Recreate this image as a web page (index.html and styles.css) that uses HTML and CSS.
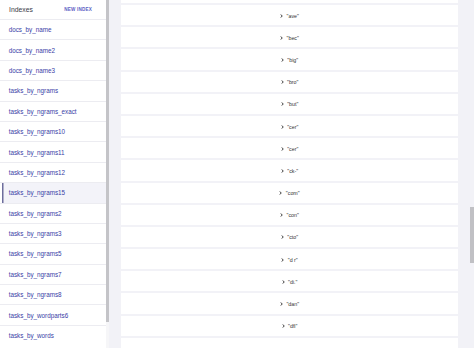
FILE: index.html
```html
<!DOCTYPE html>
<html>
<head>
<meta charset="utf-8">
<link rel="stylesheet" href="styles.css">
</head>
<body>
<div class="app">
  <aside class="sidebar">
    <div class="side-list">
      <div class="side-head">
        <span class="side-title">Indexes</span>
        <span class="new-index">NEW INDEX</span>
      </div>
      <div class="idx">docs_by_name</div>
      <div class="idx">docs_by_name2</div>
      <div class="idx">docs_by_name3</div>
      <div class="idx">tasks_by_ngrams</div>
      <div class="idx">tasks_by_ngrams_exact</div>
      <div class="idx">tasks_by_ngrams10</div>
      <div class="idx">tasks_by_ngrams11</div>
      <div class="idx">tasks_by_ngrams12</div>
      <div class="idx selected">tasks_by_ngrams15</div>
      <div class="idx">tasks_by_ngrams2</div>
      <div class="idx">tasks_by_ngrams3</div>
      <div class="idx">tasks_by_ngrams5</div>
      <div class="idx">tasks_by_ngrams7</div>
      <div class="idx">tasks_by_ngrams8</div>
      <div class="idx">tasks_by_wordparts6</div>
      <div class="idx">tasks_by_words</div>
    </div>
    <div class="side-track"><div class="side-thumb"></div></div>
  </aside>
  <main class="main">
    <div class="rows">
      <div class="row row-cut"></div>
      <div class="row"><svg class="chev" viewBox="0 0 3 4"><path d="M0.6 0.5 L2.3 2 L0.6 3.5"/></svg><span class="val">"ave"</span></div>
      <div class="row"><svg class="chev" viewBox="0 0 3 4"><path d="M0.6 0.5 L2.3 2 L0.6 3.5"/></svg><span class="val">"bec"</span></div>
      <div class="row"><svg class="chev" viewBox="0 0 3 4"><path d="M0.6 0.5 L2.3 2 L0.6 3.5"/></svg><span class="val">"big"</span></div>
      <div class="row"><svg class="chev" viewBox="0 0 3 4"><path d="M0.6 0.5 L2.3 2 L0.6 3.5"/></svg><span class="val">"bro"</span></div>
      <div class="row"><svg class="chev" viewBox="0 0 3 4"><path d="M0.6 0.5 L2.3 2 L0.6 3.5"/></svg><span class="val">"but"</span></div>
      <div class="row"><svg class="chev" viewBox="0 0 3 4"><path d="M0.6 0.5 L2.3 2 L0.6 3.5"/></svg><span class="val">"cer"</span></div>
      <div class="row"><svg class="chev" viewBox="0 0 3 4"><path d="M0.6 0.5 L2.3 2 L0.6 3.5"/></svg><span class="val">"cer"</span></div>
      <div class="row"><svg class="chev" viewBox="0 0 3 4"><path d="M0.6 0.5 L2.3 2 L0.6 3.5"/></svg><span class="val">"ck-"</span></div>
      <div class="row"><svg class="chev" viewBox="0 0 3 4"><path d="M0.6 0.5 L2.3 2 L0.6 3.5"/></svg><span class="val">"com"</span></div>
      <div class="row"><svg class="chev" viewBox="0 0 3 4"><path d="M0.6 0.5 L2.3 2 L0.6 3.5"/></svg><span class="val">"con"</span></div>
      <div class="row"><svg class="chev" viewBox="0 0 3 4"><path d="M0.6 0.5 L2.3 2 L0.6 3.5"/></svg><span class="val">"cto"</span></div>
      <div class="row"><svg class="chev" viewBox="0 0 3 4"><path d="M0.6 0.5 L2.3 2 L0.6 3.5"/></svg><span class="val">"d r"</span></div>
      <div class="row"><svg class="chev" viewBox="0 0 3 4"><path d="M0.6 0.5 L2.3 2 L0.6 3.5"/></svg><span class="val">"di."</span></div>
      <div class="row"><svg class="chev" viewBox="0 0 3 4"><path d="M0.6 0.5 L2.3 2 L0.6 3.5"/></svg><span class="val">"dan"</span></div>
      <div class="row"><svg class="chev" viewBox="0 0 3 4"><path d="M0.6 0.5 L2.3 2 L0.6 3.5"/></svg><span class="val">"dfi"</span></div>
      <div class="row"></div>
    </div>
  </main>
  <div class="main-track"><div class="main-thumb"></div></div>
</div>
</body>
</html>
```
FILE: styles.css
```css
html, body {
  margin: 0;
  padding: 0;
  height: 348px;
  overflow: hidden;
  background: #f2f2f7;
  font-family: "Liberation Sans", Arial, sans-serif;
}

.app {
  display: flex;
  height: 348px;
  overflow: hidden;
}

.sidebar {
  display: flex;
  width: 109px;
  flex: none;
  background: #ffffff;
}

.side-list {
  width: 106px;
  flex: none;
}

.side-head {
  display: flex;
  align-items: center;
  justify-content: space-between;
  height: 19px;
  padding: 0 14px 1px 9px;
  box-sizing: border-box;
}

.side-title {
  font-size: 6.8px;
  color: #3a3a48;
}

.new-index {
  font-size: 4.6px;
  font-weight: bold;
  letter-spacing: 0.2px;
  color: #5b60c4;
}

.idx {
  height: 20.4px;
  box-sizing: border-box;
  border-top: 1px solid #ececf1;
  display: flex;
  align-items: center;
  padding-left: 8.7px;
  font-size: 6.3px;
  color: #383ea6;
}

.idx.selected {
  background: #f3f3f9;
  box-shadow: inset 2px 0 0 #ffffff, inset 3.5px 0 0 #6d6d9c;
}

.side-track {
  width: 3px;
  flex: none;
  background: #f6f6f8;
}

.side-thumb {
  height: 322px;
  background: #c4c4c8;
}

.main {
  flex: 1;
  padding: 0 12px;
  overflow: hidden;
}

.rows {
  display: flex;
  flex-direction: column;
  gap: 2px;
}

.row {
  height: 20.2px;
  flex: none;
  box-sizing: border-box;
  padding-top: 1px;
  background: #ffffff;
  display: flex;
  align-items: center;
  justify-content: center;
  gap: 3.5px;
  font-size: 5.3px;
  color: #333333;
}

.row-cut {
  height: 3px;
  padding-top: 0;
}

.chev {
  width: 3px;
  height: 4px;
  flex: none;
}

.chev path {
  fill: none;
  stroke: #333333;
  stroke-width: 0.9;
}

.main-track {
  width: 4px;
  flex: none;
  padding-top: 207px;
  box-sizing: border-box;
}

.main-thumb {
  height: 56px;
  background: #c0c0c4;
}
```
